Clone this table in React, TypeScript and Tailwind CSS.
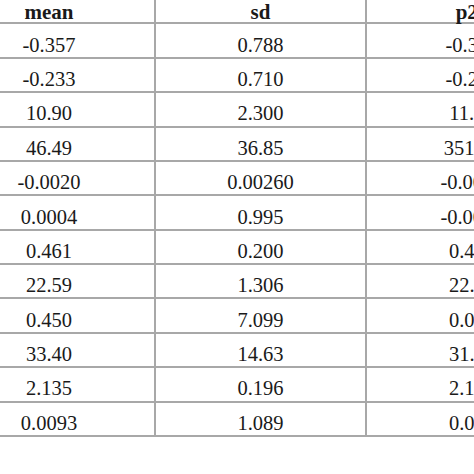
const headers = ["mean", "sd", "p25"];

const rows: string[][] = [
  ["-0.357", "0.788", "-0.318"],
  ["-0.233", "0.710", "-0.205"],
  ["10.90", "2.300", "11.00"],
  ["46.49", "36.85", "351.20"],
  ["-0.0020", "0.00260", "-0.0021"],
  ["0.0004", "0.995", "-0.0004"],
  ["0.461", "0.200", "0.450"],
  ["22.59", "1.306", "22.50"],
  ["0.450", "7.099", "0.004"],
  ["33.40", "14.63", "31.00"],
  ["2.135", "0.196", "2.146"],
  ["0.0093", "1.089", "0.009"],
];

function Cell({ text, col, head }: { text: string; col: number; head?: boolean }) {
  return (
    <div
      className={
        "flex h-[34.375px] items-center justify-center border-b-2 border-[#a8a8a8] " +
        (col > 0 ? "border-l-2 " : "") +
        (head ? "pt-[13px] text-[21px] font-bold" : "pt-[9px] text-[20.5px]")
      }
    >
      {text}
    </div>
  );
}

export default function App() {
  return (
    <div className="h-[474px] w-[474px] overflow-hidden bg-white text-[#1a1a1a] [font-family:'Liberation_Serif',serif]">
      <div className="ml-[-56px] mt-[-10px] grid w-[633px] grid-cols-[210px_211px_212px]">
        {headers.map((h, i) => (
          <Cell key={h} text={h} col={i} head />
        ))}
        {rows.map((r, ri) =>
          r.map((v, ci) => <Cell key={ri + "-" + ci} text={v} col={ci} />)
        )}
      </div>
    </div>
  );
}
